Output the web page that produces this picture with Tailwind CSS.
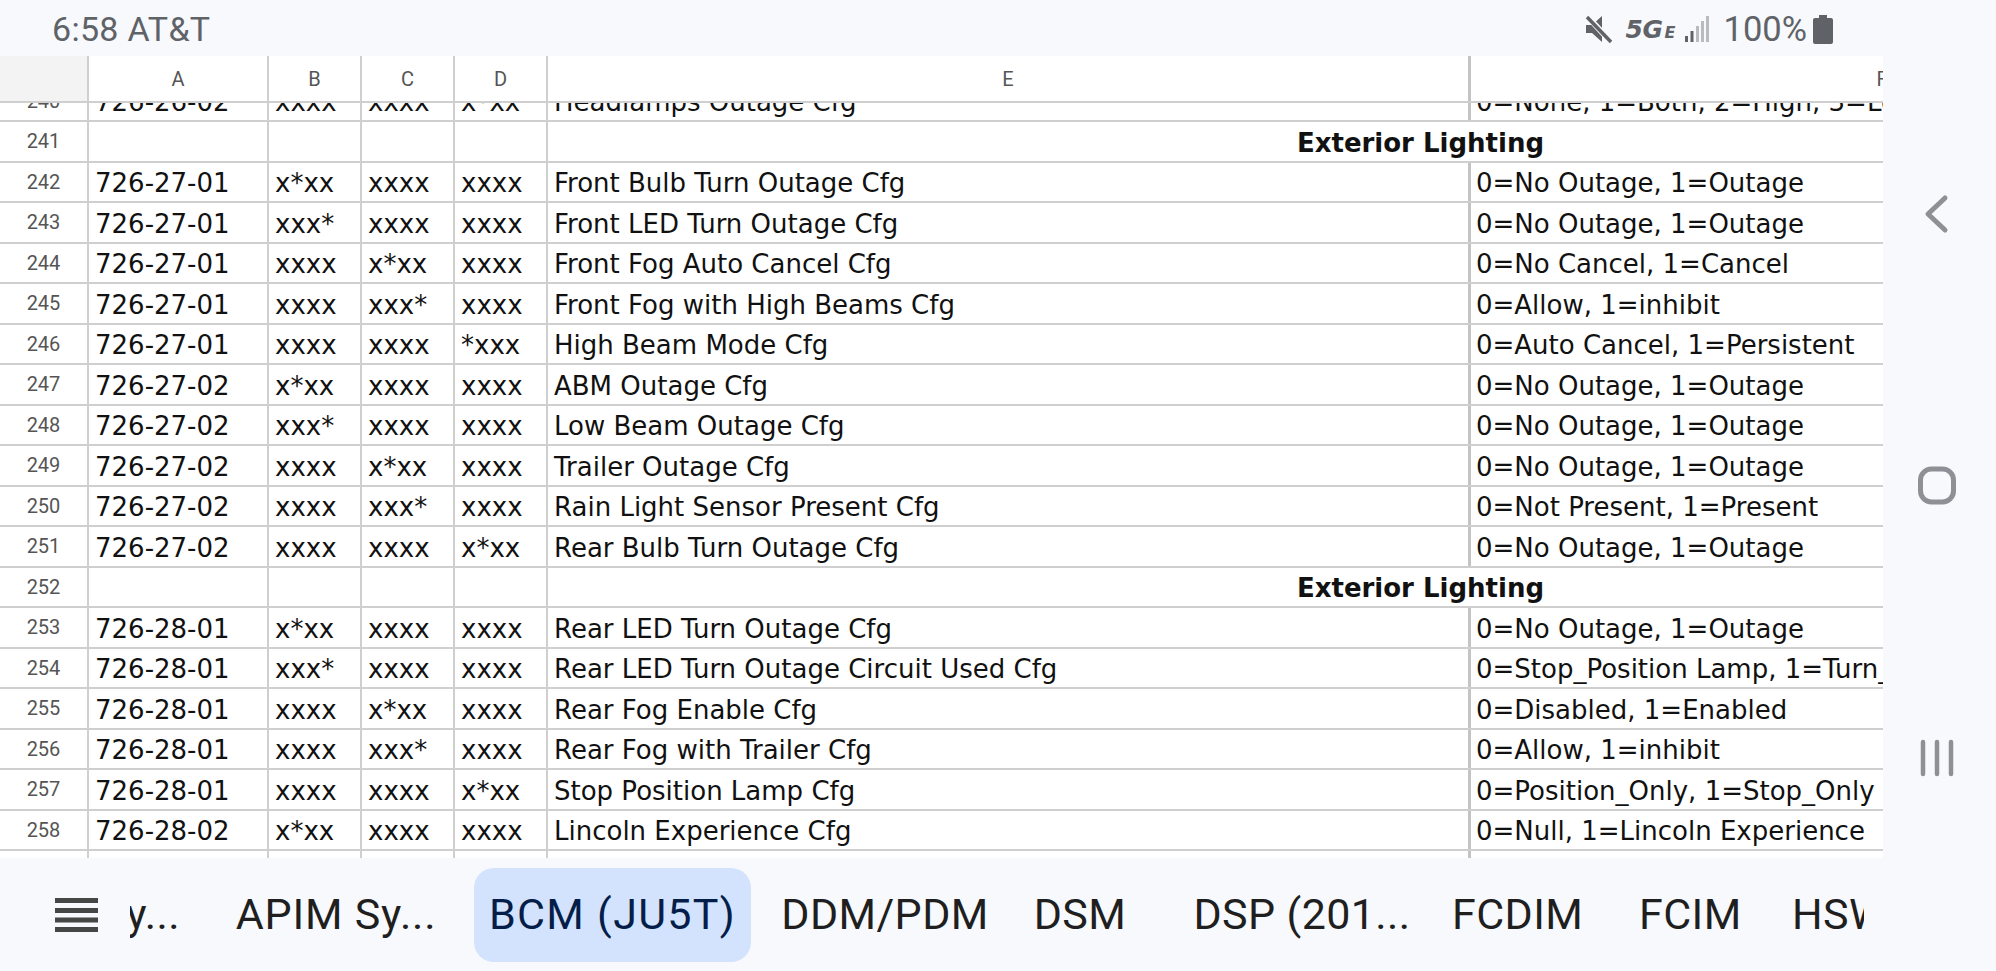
<!DOCTYPE html>
<html lang="en">
<head>
  <meta charset="UTF-8" />
  <title>Sheet</title>
  <script src="https://cdn.jsdelivr.net/npm/@tailwindcss/browser@4"></script>
</head>
<body class="bg-[#f8f9fd] font-['Roboto',sans-serif] w-[1996px] h-[971px] overflow-hidden">
  <div class="flex w-full h-full">
    <div class="w-[1883px] flex flex-col shrink-0">
      <!-- status bar -->
      <div class="h-[56px] flex items-center justify-between pt-[2px] pl-[52px] pr-[50px] text-[#5f6368] shrink-0">
        <span class="text-[34px] leading-none tracking-[0.3px]">6:58 AT&amp;T</span>
        <div class="flex items-center">
          <svg width="28" height="30" viewBox="0 0 28 30">
            <path d="M1 11h6l10-9v26l-10-9H1z" fill="#5f6368" />
            <path d="M1 1l26 28" stroke="#f8f9fd" stroke-width="6" />
            <path d="M2 3l24 25" stroke="#5f6368" stroke-width="3.5" />
          </svg>
          <span class="ml-[11px] w-[52px] pl-[2px] text-[25px] leading-none font-bold italic font-['DejaVu_Sans',sans-serif] tracking-[-0.5px] whitespace-nowrap">5G<span class="text-[16px] ml-[2px]">E</span></span>
          <svg width="26" height="28" viewBox="0 0 26 28" class="ml-[8px]">
            <rect x="1" y="21" width="3" height="6" fill="#5f6368" />
            <rect x="6.5" y="16" width="3" height="11" fill="#5f6368" />
            <rect x="12" y="11" width="3" height="16" fill="#b9bbbf" />
            <rect x="17" y="6" width="3" height="21" fill="#b9bbbf" />
            <rect x="22" y="1" width="3" height="26" fill="#b9bbbf" />
          </svg>
          <span class="ml-[14px] text-[34.5px] leading-none">100%</span>
          <svg width="20" height="30" viewBox="0 0 20 30" class="ml-[6px]">
            <path d="M6 1h8v3h4a2 2 0 0 1 2 2v22a2 2 0 0 1-2 2H2a2 2 0 0 1-2-2V6a2 2 0 0 1 2-2h4z" fill="#5f6368" />
          </svg>
        </div>
      </div>

      <!-- sheet -->
      <div class="h-[802px] bg-white flex flex-col overflow-hidden">
        <div class="grid grid-cols-[89px_180px_93px_93px_93px_923px_822px] h-[47px] shrink-0 border-b-2 border-[#cfcfcf] text-[20px] text-[#555] w-[2293px]">
          <div class="bg-[#f3f3f3] border-r-2 border-[#cfcfcf]"></div>
          <div class="flex items-center justify-center border-r-2 border-[#cfcfcf]">A</div>
          <div class="flex items-center justify-center border-r-2 border-[#cfcfcf]">B</div>
          <div class="flex items-center justify-center border-r-2 border-[#cfcfcf]">C</div>
          <div class="flex items-center justify-center border-r-2 border-[#cfcfcf]">D</div>
          <div class="flex items-center justify-center border-r-[3px] border-[#c4c4c4]">E</div>
          <div class="flex items-center justify-center">F</div>
        </div>
        <div class="overflow-hidden flex-1">
          <div id="rows" class="mt-[-21.3px] w-[2293px]"></div>
        </div>
      </div>

      <!-- sheet tabs -->
      <div class="h-[113px] flex items-center shrink-0">
        <svg width="43" height="34" viewBox="0 0 43 34" class="ml-[55px] shrink-0">
          <path d="M0 2.5h43M0 12.5h43M0 22h43M0 31.5h43" stroke="#444746" stroke-width="5" />
        </svg>
        <div class="ml-[32px] w-[1734px] h-[94px] flex items-center overflow-hidden text-[43px] font-[450] tracking-[0.4px] text-[#1f1f1f] whitespace-nowrap">
          <div class="w-[50px] shrink-0 flex justify-end overflow-hidden"><span>Sy...</span></div>
          <div class="ml-[38px] w-[236px] shrink-0 text-center tracking-[0.8px]">APIM Sy...</div>
          <div class="ml-[20px] w-[277px] h-[94px] shrink-0 flex items-center justify-center rounded-[20px] bg-[#d3e3fd] text-[#041e49] tracking-[1.3px]">BCM (JU5T)</div>
          <div class="ml-[11px] w-[246px] shrink-0 text-center">DDM/PDM</div>
          <div class="ml-[7px] w-[130px] shrink-0 text-center">DSM</div>
          <div class="ml-[32px] w-[250px] shrink-0 text-center">DSP (201...</div>
          <div class="ml-[25px] w-[131px] shrink-0 text-center">FCDIM</div>
          <div class="ml-[56px] w-[101px] shrink-0 text-center">FCIM</div>
          <div class="ml-[52px] w-[100px] shrink-0">HSW</div>
        </div>
      </div>
    </div>

    <!-- android nav -->
    <div class="flex-1 relative">
      <svg width="113" height="971" viewBox="0 0 113 971" class="absolute inset-0">
        <path d="M62 198 45 214 62 230" fill="none" stroke="#8e9095" stroke-width="5" stroke-linecap="round" stroke-linejoin="round" />
        <rect x="37.5" y="469" width="33" height="33" rx="11" fill="none" stroke="#8e9095" stroke-width="5" />
        <path d="M40 742v32M54 742v32M68 742v32" stroke="#8e9095" stroke-width="4.5" stroke-linecap="round" />
      </svg>
    </div>
  </div>

  <script>
    const rows = [
      { n: 240, a: "726-26-02", b: "xxxx", c: "xxxx", d: "x*xx", e: "Headlamps Outage Cfg", f: "0=None, 1=Both, 2=High, 3=Low" },
      { n: 241, title: "Exterior Lighting" },
      { n: 242, a: "726-27-01", b: "x*xx", c: "xxxx", d: "xxxx", e: "Front Bulb Turn Outage Cfg", f: "0=No Outage, 1=Outage" },
      { n: 243, a: "726-27-01", b: "xxx*", c: "xxxx", d: "xxxx", e: "Front LED Turn Outage Cfg", f: "0=No Outage, 1=Outage" },
      { n: 244, a: "726-27-01", b: "xxxx", c: "x*xx", d: "xxxx", e: "Front Fog Auto Cancel Cfg", f: "0=No Cancel, 1=Cancel" },
      { n: 245, a: "726-27-01", b: "xxxx", c: "xxx*", d: "xxxx", e: "Front Fog with High Beams Cfg", f: "0=Allow, 1=inhibit" },
      { n: 246, a: "726-27-01", b: "xxxx", c: "xxxx", d: "*xxx", e: "High Beam Mode Cfg", f: "0=Auto Cancel, 1=Persistent" },
      { n: 247, a: "726-27-02", b: "x*xx", c: "xxxx", d: "xxxx", e: "ABM Outage Cfg", f: "0=No Outage, 1=Outage" },
      { n: 248, a: "726-27-02", b: "xxx*", c: "xxxx", d: "xxxx", e: "Low Beam Outage Cfg", f: "0=No Outage, 1=Outage" },
      { n: 249, a: "726-27-02", b: "xxxx", c: "x*xx", d: "xxxx", e: "Trailer Outage Cfg", f: "0=No Outage, 1=Outage" },
      { n: 250, a: "726-27-02", b: "xxxx", c: "xxx*", d: "xxxx", e: "Rain Light Sensor Present Cfg", f: "0=Not Present, 1=Present" },
      { n: 251, a: "726-27-02", b: "xxxx", c: "xxxx", d: "x*xx", e: "Rear Bulb Turn Outage Cfg", f: "0=No Outage, 1=Outage" },
      { n: 252, title: "Exterior Lighting" },
      { n: 253, a: "726-28-01", b: "x*xx", c: "xxxx", d: "xxxx", e: "Rear LED Turn Outage Cfg", f: "0=No Outage, 1=Outage" },
      { n: 254, a: "726-28-01", b: "xxx*", c: "xxxx", d: "xxxx", e: "Rear LED Turn Outage Circuit Used Cfg", f: "0=Stop_Position Lamp, 1=Turn_Lamp" },
      { n: 255, a: "726-28-01", b: "xxxx", c: "x*xx", d: "xxxx", e: "Rear Fog Enable Cfg", f: "0=Disabled, 1=Enabled" },
      { n: 256, a: "726-28-01", b: "xxxx", c: "xxx*", d: "xxxx", e: "Rear Fog with Trailer Cfg", f: "0=Allow, 1=inhibit" },
      { n: 257, a: "726-28-01", b: "xxxx", c: "xxxx", d: "x*xx", e: "Stop Position Lamp Cfg", f: "0=Position_Only, 1=Stop_Only" },
      { n: 258, a: "726-28-02", b: "x*xx", c: "xxxx", d: "xxxx", e: "Lincoln Experience Cfg", f: "0=Null, 1=Lincoln Experience" },
      { n: 259, a: "", b: "", c: "", d: "", e: "", f: "" }
    ];

    const cell = "pl-[6px] flex items-end border-r-2 border-[#cfcfcf] overflow-hidden whitespace-nowrap";
    const container = document.getElementById("rows");

    rows.forEach(row => {
      const div = document.createElement("div");
      div.className = "grid grid-cols-[89px_180px_93px_93px_93px_923px_822px] h-[40.5px] border-b-2 border-[#cfcfcf] font-['DejaVu_Sans',sans-serif] text-[26px] leading-[36px] text-[#111]";
      const num = `<div class="flex items-center justify-center border-r-2 border-[#cfcfcf] font-['Roboto',sans-serif] text-[20px] text-[#555]">${row.n}</div>`;
      if (row.title) {
        div.innerHTML = num + `
          <div class="border-r-2 border-[#cfcfcf]"></div>
          <div class="border-r-2 border-[#cfcfcf]"></div>
          <div class="border-r-2 border-[#cfcfcf]"></div>
          <div class="border-r-2 border-[#cfcfcf]"></div>
          <div class="col-span-2 flex items-end justify-center font-bold">${row.title}</div>`;
      } else {
        div.innerHTML = num + `
          <div class="${cell}">${row.a}</div>
          <div class="${cell}">${row.b}</div>
          <div class="${cell}">${row.c}</div>
          <div class="${cell}">${row.d}</div>
          <div class="pl-[6px] flex items-end border-r-[3px] border-[#c4c4c4] overflow-hidden whitespace-nowrap">${row.e}</div>
          <div class="pl-[5px] flex items-end overflow-hidden whitespace-nowrap">${row.f}</div>`;
      }
      container.appendChild(div);
    });
  </script>
</body>
</html>
